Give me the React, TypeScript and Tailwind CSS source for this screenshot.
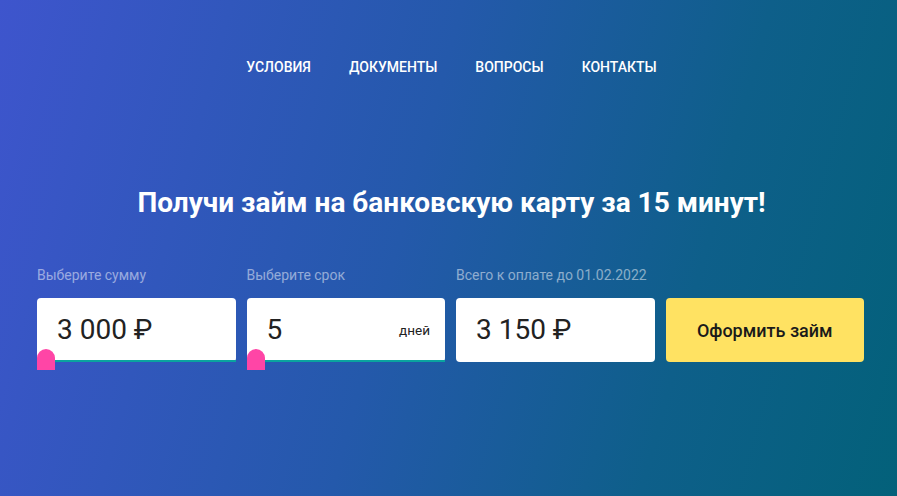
import React from 'react';

const nav = ['Условия', 'Документы', 'Вопросы', 'Контакты'];

function SliderCard({ value, unit }: { value: string; unit?: string }) {
  return (
    <div className="relative h-16 rounded-[4px] bg-white">
      <div className="flex h-full items-center justify-between pl-5 pr-[15px]">
        <span className="text-[28px] leading-none text-[#222]">{value}</span>
        {unit && <span className="text-[13.5px] text-[#222]">{unit}</span>}
      </div>
      <div className="absolute left-0 right-0 top-[62px] h-[2px] bg-[#0aa49f]" />
      <div className="absolute left-0 top-[51px] h-[21px] w-[18px] rounded-t-full bg-[#ff45a6]" />
    </div>
  );
}

export default function App() {
  return (
    <div
      className="min-h-[496px] bg-[linear-gradient(105deg,#3e55cd_0%,#2459ab_45%,#0e5f8a_75%,#03617a_100%)] text-white"
      style={{ fontFamily: 'Roboto, "Noto Sans", sans-serif' }}
    >
      <div className="pl-[6px]">
        <nav className="flex justify-center gap-[38px] pt-[58px] text-[14px] font-medium uppercase leading-[18px]">
          {nav.map((item) => (
            <a key={item} href="#" className="hover:opacity-80">
              {item}
            </a>
          ))}
        </nav>

        <h1 className="mt-[111px] text-center text-[28px] font-bold leading-[32px]">
          Получи займ на банковскую карту за 15 минут!
        </h1>
      </div>

      <div className="mt-[47px] pl-[37px]">
        <div className="grid w-[827px] grid-cols-4 gap-x-[11px]">
          <div>
            <div className="text-[14px] leading-[18px] text-white/50">Выберите сумму</div>
            <div className="mt-[14px]">
              <SliderCard value="3 000 ₽" />
            </div>
          </div>
          <div>
            <div className="text-[14px] leading-[18px] text-white/50">Выберите срок</div>
            <div className="mt-[14px]">
              <SliderCard value="5" unit="дней" />
            </div>
          </div>
          <div>
            <div className="text-[14px] leading-[18px] text-white/50">Всего к оплате до 01.02.2022</div>
            <div className="mt-[14px] flex h-16 items-center rounded-[4px] bg-white pl-5">
              <span className="text-[28px] leading-none text-[#222]">3 150 ₽</span>
            </div>
          </div>
          <div className="flex flex-col justify-end">
            <button
              type="button"
              className="h-16 rounded-[4px] bg-[#ffe262] text-[18px] font-medium text-[#1a1a1a] hover:bg-[#ffd940]"
            >
              Оформить займ
            </button>
          </div>
        </div>
      </div>
    </div>
  );
}
